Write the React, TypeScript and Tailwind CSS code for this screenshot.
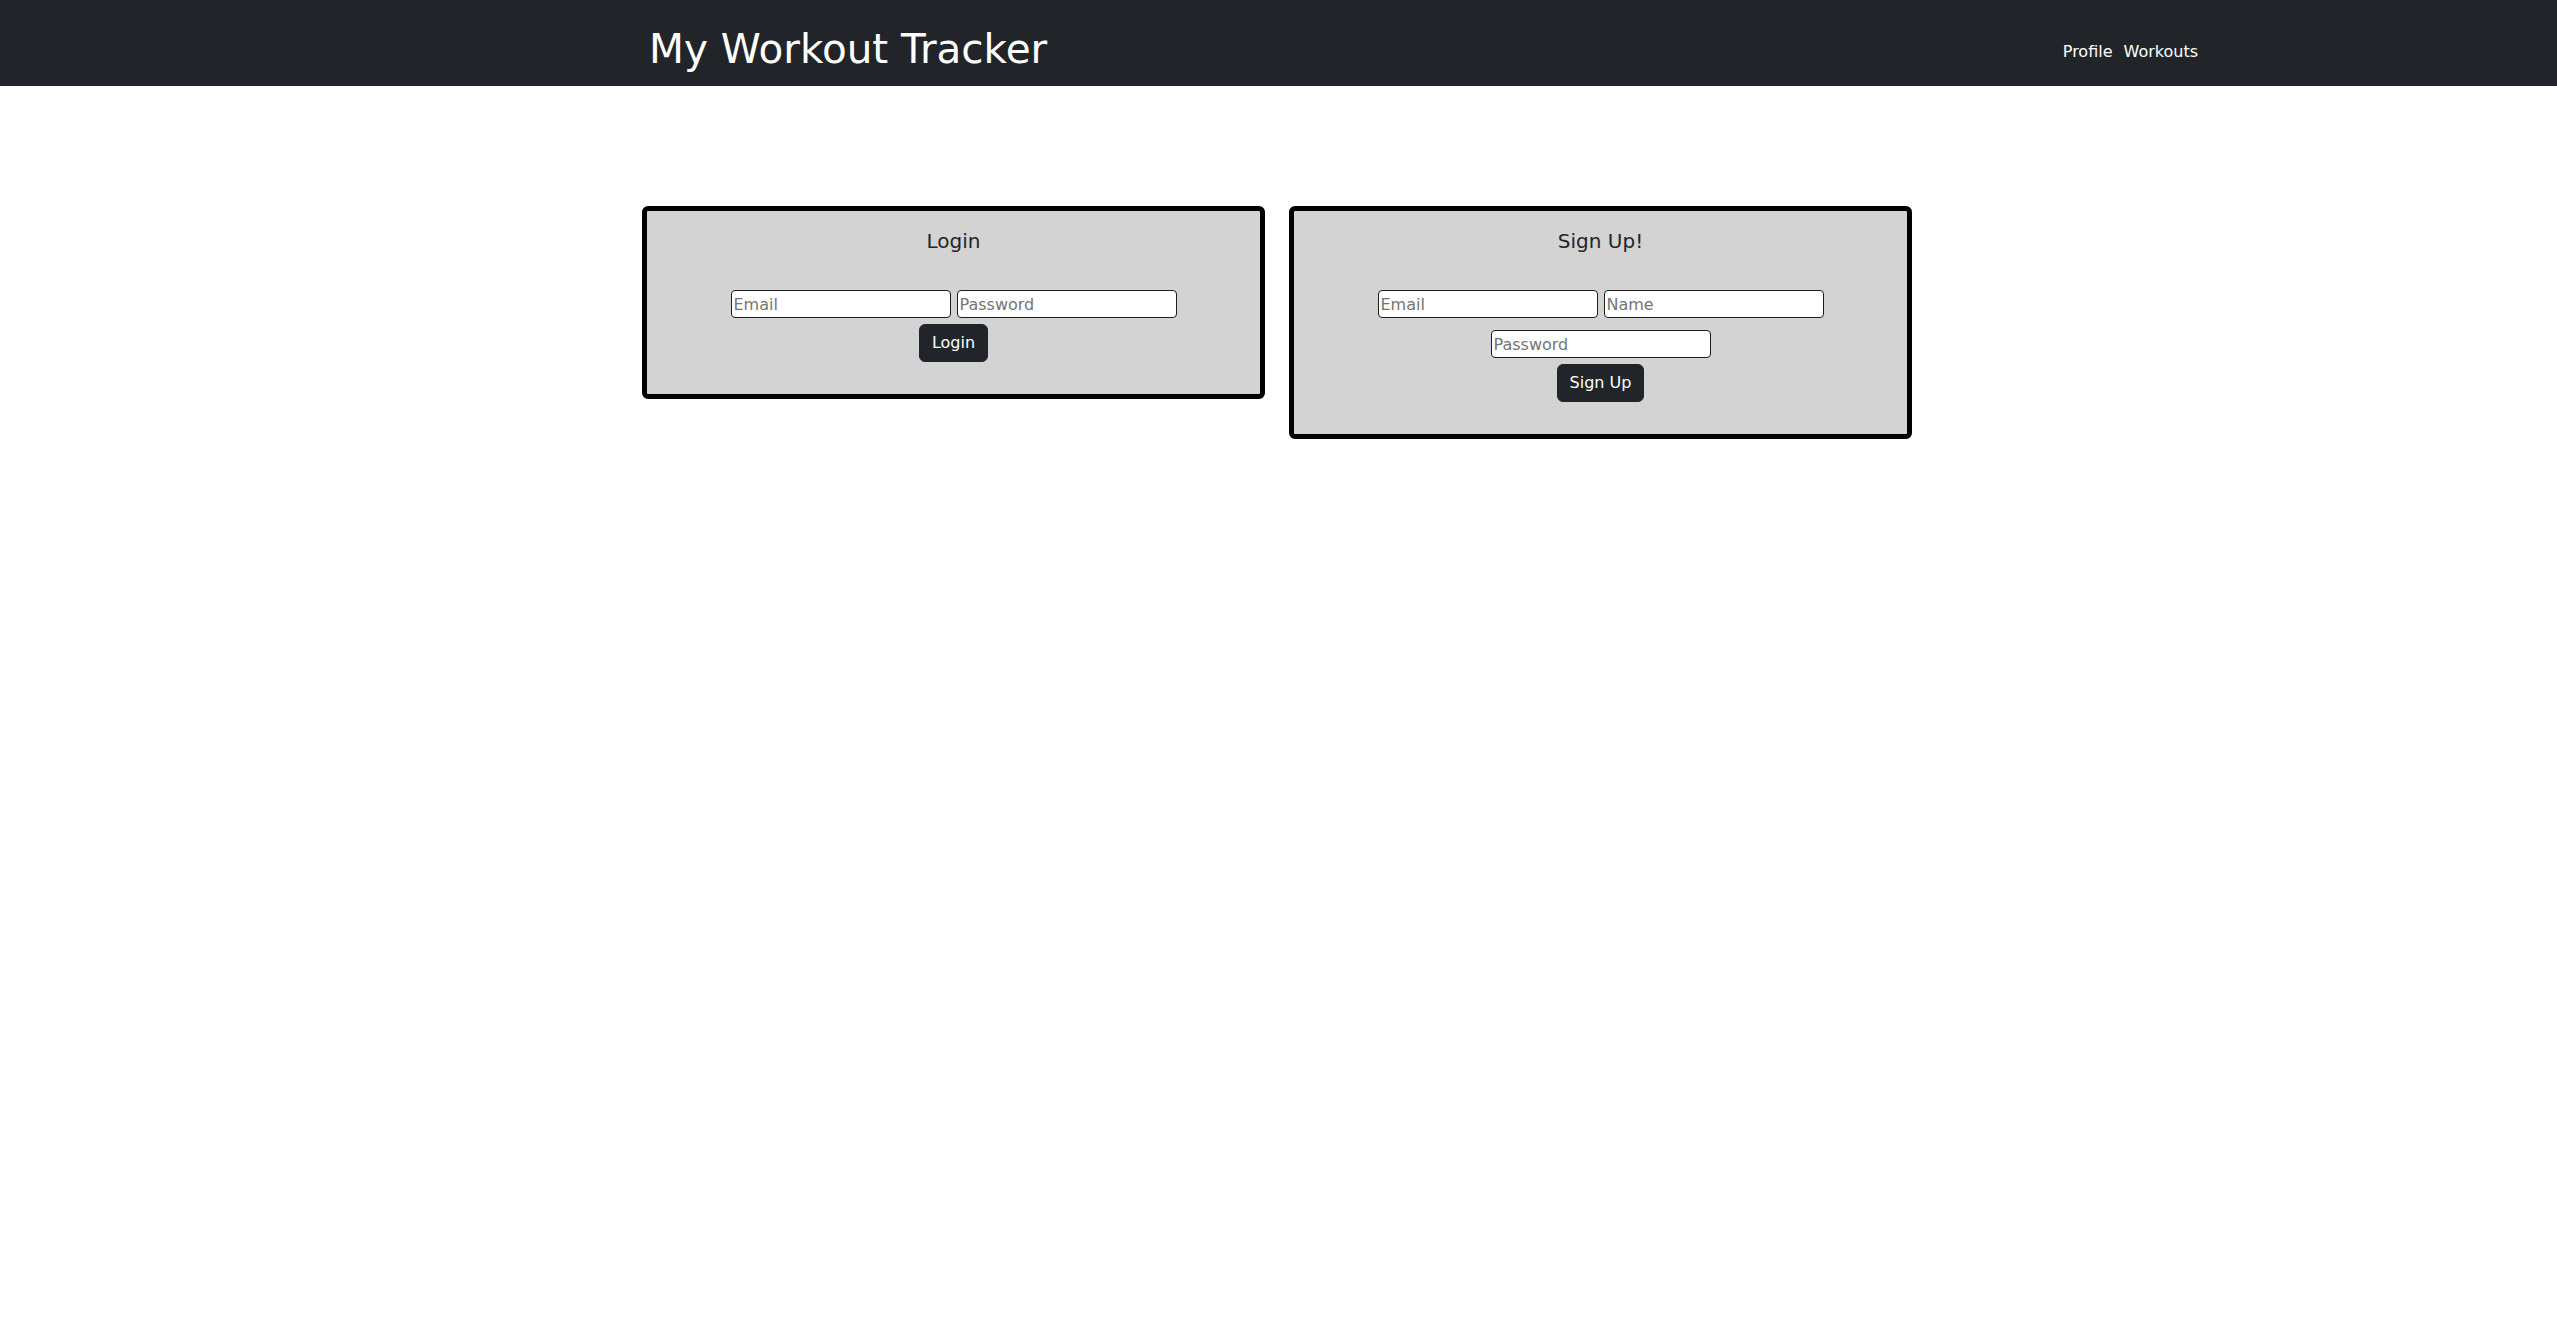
import type { ReactNode } from "react";

/**
 * Login / sign-up landing page for the workout tracker.
 * Fixed-width layout sized for the 2557px screen it was captured on.
 */

const FONT = "font-['DejaVu_Sans',_'Liberation_Sans',_sans-serif]";

function TextInput({ placeholder, type = "text" }: { placeholder: string; type?: string }) {
  return (
    <input
      type={type}
      placeholder={placeholder}
      className="block h-[28px] w-[220px] rounded-[4px] border border-[#1e1e1e] bg-white px-[2px] text-base text-[#212529] outline-none placeholder:text-[#757575]"
    />
  );
}

function DarkButton({ children }: { children: ReactNode }) {
  return (
    <button
      type="button"
      className="mt-[6px] rounded-[6px] border border-[#212529] bg-[#212529] px-3 py-1.5 text-base leading-6 text-white"
    >
      {children}
    </button>
  );
}

function Panel({ title, children }: { title: string; children: ReactNode }) {
  return (
    <section className="flex w-[623px] flex-col items-center rounded-[6px] border-[5px] border-black bg-[#d3d3d3] pt-[18px] pb-[32px]">
      <h2 className="text-[20px] leading-6 text-[#212529]">{title}</h2>
      <div className="mt-[37px] flex flex-col items-center">{children}</div>
    </section>
  );
}

export default function App() {
  return (
    <div className={`min-h-screen bg-white ${FONT}`}>
      <header className="h-[86px] bg-[#212529]">
        <div className="ml-[649px] flex w-[1549px] items-start justify-between">
          <h1 className="pt-[29px] text-[40.5px] leading-none text-white">My Workout Tracker</h1>
          <nav className="flex gap-[11px] pt-[44px] text-base leading-none text-white">
            <a href="#profile">Profile</a>
            <a href="#workouts">Workouts</a>
          </nav>
        </div>
      </header>

      <main className="mt-[120px] ml-[642px] flex items-start gap-[24px]">
        <Panel title="Login">
          <div className="flex gap-[6px]">
            <TextInput placeholder="Email" type="email" />
            <TextInput placeholder="Password" type="password" />
          </div>
          <DarkButton>Login</DarkButton>
        </Panel>

        <Panel title="Sign Up!">
          <div className="flex gap-[6px]">
            <TextInput placeholder="Email" type="email" />
            <TextInput placeholder="Name" />
          </div>
          <div className="mt-[12px]">
            <TextInput placeholder="Password" type="password" />
          </div>
          <DarkButton>Sign Up</DarkButton>
        </Panel>
      </main>
    </div>
  );
}
